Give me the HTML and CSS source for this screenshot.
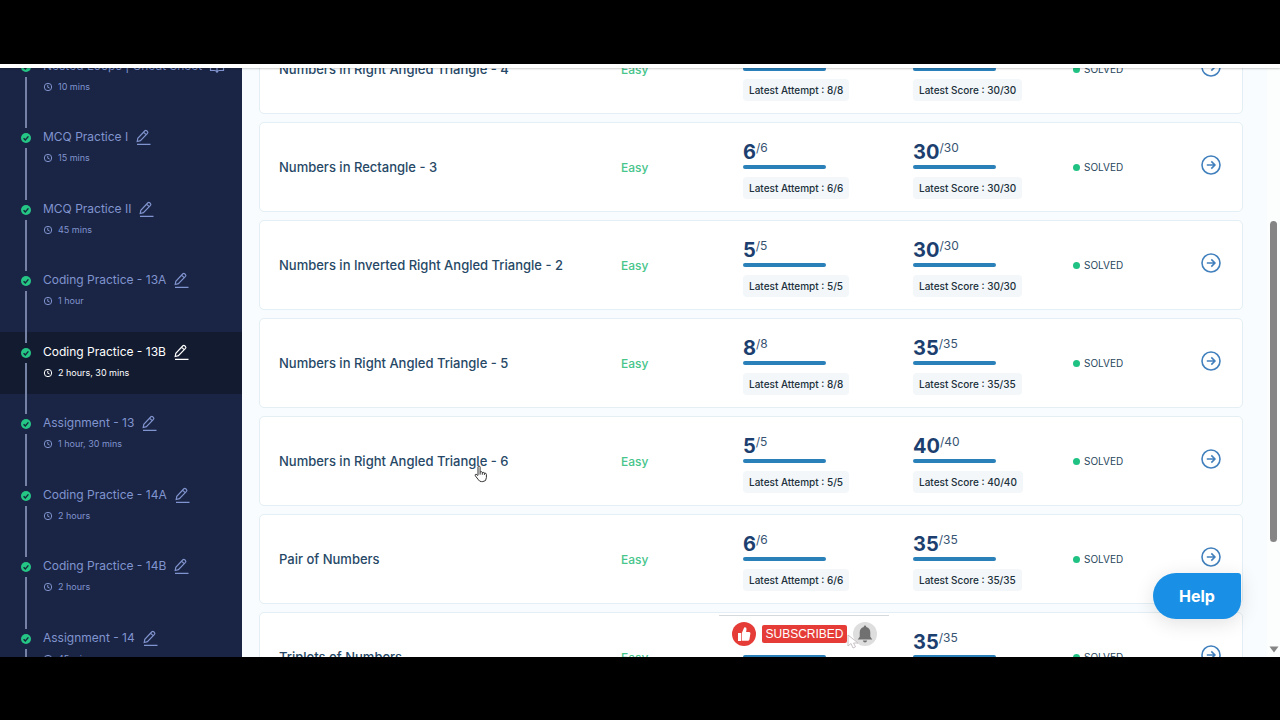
FILE: index.html
```html
<!DOCTYPE html>
<html lang="en">
<head>
<meta charset="utf-8">
<title>Coding Practice - 13B</title>
<link rel="stylesheet" href="styles.css">
<script src="app.js" defer></script>
</head>
<body>
<svg class="defs" aria-hidden="true">
  <symbol id="pencil" viewBox="0 0 16 16"><path d="M2.200 12.500l.6-3.100L9.900 1.800q.9-.8 1.800 0l.8.8q.8.8 0 1.700L5.400 11.700zM8.600 3.200l2.500 2.500M2 15.300h13.500"/></symbol>
  <symbol id="book" viewBox="0 0 16 16"><path d="M8 4Q6 2 1.500 2.300v10.200h4.300Q7.500 12.500 8 14.500Q8.500 12.500 10.200 12.500h4.300V2.300Q10 2 8 4v10"/></symbol>
  <symbol id="clock" viewBox="0 0 10 10"><circle cx="5" cy="5" r="3.700"/><path d="M4.800 2.800v2.500l1.800.7"/></symbol>
  <symbol id="check" viewBox="0 0 10 10"><circle cx="5" cy="5" r="5"/><path d="M2.600 5.200l1.700 1.700 3.100-3.500" fill="none" stroke="#14263a" stroke-width="1.400"/></symbol>
  <symbol id="arrow" viewBox="0 0 20 20"><circle cx="10" cy="10" r="9"/><path d="M5.800 10h8M10.300 6.400l3.600 3.600-3.600 3.600"/></symbol>
</svg>
<div class="letterbox"></div>
<header class="topbar"></header>
<div class="workspace">
  <nav class="sidebar" aria-label="Course topics"><ul class="topics" id="topics"></ul></nav>
  <main class="content"><div class="questions" id="questions"></div></main>
  <div class="scrollbar" aria-hidden="true"><div class="thumb"></div><svg class="down" viewBox="0 0 10 7"><path d="M.5.500h9L5 6.500z"/></svg></div>
  <button class="help" type="button">Help</button>
  <svg class="hand" viewBox="0 0 14 18" aria-hidden="true"><path d="M4 10V2.200q0-1.200 1-1.200t1.100 1.200V7q1.800-1 2.200.5 1.700-.7 2.100.6 1.900-.3 2 1.300v3.200q0 3.900-3.600 4H7.500q-2 0-3-1.700L1.300 10.800q-.5-1.300.6-1.600 1-.1 2.100 1.700M6.100 7v2.700M8.300 7.500v2.200M10.400 8.100v1.800"/></svg>
  <div class="subscribe">
    <svg class="like" viewBox="0 0 24 24" aria-hidden="true"><circle cx="12" cy="12" r="12"/><path d="M6 11h3v8H6zM9.700 11.200l2.500-5.800q2.600-.5 2.300 2l-.4 2.500h3q1.500.1 1.300 1.500l-1 6q-.3 1.400-1.700 1.400h-6z"/></svg>
    <button class="subscribed" type="button">SUBSCRIBED</button>
    <svg class="bell" viewBox="0 0 24 24" aria-hidden="true"><circle cx="12" cy="12" r="12"/><path d="M12 3.500q1.200 0 1.300 1.400 4 1 4 5.600v4.200l2 2.700H4.700l2-2.700v-4.200q0-4.600 4-5.600.1-1.400 1.300-1.400zM9.800 18.500h4.400q-.5 2-2.200 2t-2.200-2z"/></svg>
    <svg class="pointer" viewBox="0 0 12 15" aria-hidden="true"><path d="M1 1v11l3-2.500L6 14l2.500-1.200L6.500 9H11z"/></svg>
  </div>
</div>
<div class="letterbox"></div>
</body>
</html>
```
FILE: styles.css
```css
* { box-sizing: border-box; }
body {
  margin: 0;
  height: 100vh;
  overflow: hidden;
  display: grid;
  grid-template-rows: 64px 4px minmax(0, 1fr) 63px;
  background: #fff;
  font-family: Inter, "Liberation Sans", sans-serif;
}
button { border: 0; padding: 0; font-family: inherit; }
.defs { position: absolute; width: 0; height: 0; }
.letterbox { background: #000; position: relative; z-index: 3; }
.topbar { background: #fff; box-shadow: 0 1px 2px #0003; position: relative; z-index: 2; }
.workspace {
  position: relative;
  display: grid;
  grid-template-columns: 242px minmax(0, 1fr) 13px;
  min-height: 0;
  overflow: hidden;
}

.sidebar { background: #1a2444; min-height: 0; }
.topics {
  list-style: none;
  margin: -22px 0 0;
  padding: 0;
  height: calc(100% + 45px);
  display: grid;
  grid-auto-rows: minmax(0, 1fr);
  gap: 9px;
}
.topic {
  display: grid;
  grid-template-columns: 10px 1fr;
  column-gap: 12px;
  padding-left: 21px;
  color: #8094cf;
}
.topic.current { background: #131b30; color: #fff; }
.rail {
  position: relative;
  z-index: 1;
  display: flex;
  flex-direction: column;
  align-items: center;
  gap: 5px;
  margin: 16px 0 -20px;
}
.rail svg { width: 10px; height: 10px; flex: none; fill: #25c685; }
.rail::after { content: ""; width: 2px; flex: 1; background: #7581a5; }
.topic a { display: block; color: inherit; text-decoration: none; padding-top: 10px; }
.name, .time { display: flex; align-items: center; white-space: nowrap; }
.name { font-size: 12px; line-height: 20px; gap: 7px; }
.time { font-size: 9px; line-height: 14px; gap: 5px; margin-top: 4px; }
.name svg { width: 16px; height: 16px; fill: none; stroke: currentColor; stroke-width: 1.2; }
.time svg { width: 10px; height: 10px; fill: none; stroke: currentColor; stroke-width: 1; }

.content { background: #f8fcfe; padding: 0 24px 0 17px; min-height: 0; }
.questions { display: grid; gap: 8px; margin-top: -44px; }
.card {
  display: grid;
  grid-template-columns: 342fr 122fr 170fr 160fr 128fr 20px;
  align-items: center;
  height: 90px;
  padding: 0 21px 0 19px;
  background: #fff;
  border: 1px solid #e3eff4;
  border-radius: 5px;
}
.title { margin: 0; font-size: 13px; font-weight: 500; line-height: 20px; color: #264866; }
.level { font-size: 12px; font-weight: 500; color: #47c58b; }
.metric { padding-top: 3px; }
.value { display: flex; align-items: flex-start; height: 24px; padding-top: 1px; color: #1c3f70; }
.value strong { font-size: 20px; line-height: 24px; font-weight: 700; }
.value span { font-size: 12px; line-height: 16px; color: #365372; }
.bar { width: 83px; height: 4px; border-radius: 2px; background: #2a80b9; margin: 2px 0 8px; }
.chip {
  display: inline-block;
  vertical-align: top;
  padding: 0 6px;
  border-radius: 4px;
  background: #f3f7f9;
  color: #20303c;
  font-size: 10px;
  font-weight: 500;
  line-height: 22px;
  white-space: nowrap;
}
.status { display: flex; align-items: center; gap: 4px; font-size: 10px; color: #294760; }
.status::before { content: ""; width: 7px; height: 7px; border-radius: 50%; background: #20c283; }
.open { background: none; height: 20px; margin-bottom: 4px; }
.open svg { display: block; width: 20px; height: 20px; fill: none; stroke: #4180bd; stroke-width: 1.6; }

.scrollbar {
  background: #fcfdfd;
  display: grid;
  grid-template-rows: 153fr 321fr 104fr 7px 4px;
  justify-items: center;
}
.thumb { grid-row: 2; width: 7px; border-radius: 4px; background: #858585; }
.down { grid-row: 4; width: 10px; height: 7px; fill: #858585; }

.help {
  position: absolute;
  right: 39px;
  bottom: 38px;
  width: 88px;
  height: 46px;
  border-radius: 23px 3px 18px 23px;
  background: #1990e5;
  color: #fff;
  font-size: 16px;
  font-weight: 700;
  box-shadow: 0 4px 20px #0000001f;
}
.hand { position: absolute; left: 474px; top: 397px; width: 14px; height: 18px; fill: #fff; stroke: #333; stroke-width: 1; }
.subscribe {
  position: absolute;
  left: 719px;
  bottom: 3px;
  width: 170px;
  height: 39px;
  padding: 0 11px 3px 13px;
  display: flex;
  align-items: center;
  gap: 6px;
  background: #fff;
  border-top: 1px solid #d5dadc;
}
.like, .bell { width: 24px; height: 24px; flex: none; }
.like circle { fill: #e53c38; }
.like path { fill: #fff; }
.bell circle { fill: #dedede; }
.bell path { fill: #707070; }
.subscribed {
  width: 85px;
  height: 18px;
  flex: none;
  border-radius: 2px;
  background: #e53c38;
  color: #fff;
  font-family: "Liberation Sans", sans-serif;
  font-size: 12px;
}
.pointer { position: absolute; left: 128px; top: 18px; width: 12px; height: 15px; fill: #fff; stroke: #c9c2c6; }
```
FILE: app.js
```js
const topics = [
  ["Nested Loops | Cheat Sheet", "10 mins", "book"],
  ["MCQ Practice I", "15 mins", "pencil"],
  ["MCQ Practice II", "45 mins", "pencil"],
  ["Coding Practice - 13A", "1 hour", "pencil"],
  ["Coding Practice - 13B", "2 hours, 30 mins", "pencil"],
  ["Assignment - 13", "1 hour, 30 mins", "pencil"],
  ["Coding Practice - 14A", "2 hours", "pencil"],
  ["Coding Practice - 14B", "2 hours", "pencil"],
  ["Assignment - 14", "45 mins", "pencil"]
];
const questions = [
  ["Numbers in Right Angled Triangle - 4", 8, 30],
  ["Numbers in Rectangle - 3", 6, 30],
  ["Numbers in Inverted Right Angled Triangle - 2", 5, 30],
  ["Numbers in Right Angled Triangle - 5", 8, 35],
  ["Numbers in Right Angled Triangle - 6", 5, 40],
  ["Pair of Numbers", 6, 35],
  ["Triplets of Numbers", null, 35]
];
const icon = id => `<svg aria-hidden="true"><use href="#${id}"/></svg>`;
const metric = (label, n) => {
  const value = n === null ? "" : `<strong>${n}</strong><span>/${n}</span>`;
  const latest = n === null ? "&nbsp;" : `Latest ${label} : ${n}/${n}`;
  return `<div class="metric"><div class="value">${value}</div><div class="bar"></div><span class="chip">${latest}</span></div>`;
};

document.getElementById("topics").innerHTML = topics.map(([name, time, kind], i) => `
  <li class="topic${i === 4 ? " current" : ""}">
    <div class="rail">${icon("check")}</div>
    <a href="#topic-${i}"><span class="name">${name}${icon(kind)}</span><span class="time">${icon("clock")}${time}</span></a>
  </li>`).join("");

document.getElementById("questions").innerHTML = questions.map(([title, tries, score]) => `
  <article class="card">
    <h2 class="title">${title}</h2>
    <span class="level">Easy</span>
    ${metric("Attempt", tries)}
    ${metric("Score", score)}
    <span class="status">SOLVED</span>
    <button class="open" type="button" aria-label="Open ${title}">${icon("arrow")}</button>
  </article>`).join("");
```
